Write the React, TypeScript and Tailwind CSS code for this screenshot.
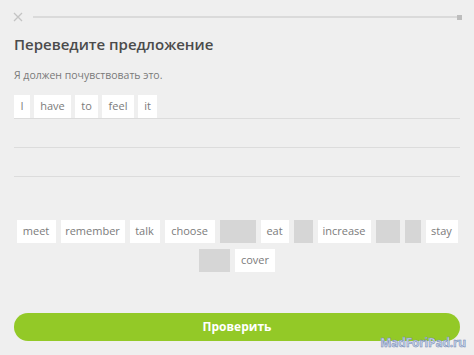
const font = { fontFamily: '"Open Sans", "Noto Sans", sans-serif' };

function Tile({ word, w }: { word?: string; w: string }) {
  if (!word) return <div className={`h-[23px] ${w} bg-[#d6d6d6]`} />;
  return (
    <div className={`h-[23px] ${w} bg-white flex items-center justify-center text-[11px] text-[#7b7b7b]`}>
      {word}
    </div>
  );
}

export default function App() {
  return (
    <div className="w-[474px] h-[355px] bg-[#efefef] relative overflow-hidden" style={font}>
      <div className="flex items-center gap-[10px] pl-[13px] pr-[12px] pt-[12px]">
        <svg width="10" height="10" viewBox="0 0 10 10" className="shrink-0">
          <path d="M1 1 L9 9 M9 1 L1 9" stroke="#c4c4c4" strokeWidth="1.3" />
        </svg>
        <div className="flex-1 flex items-center">
          <div className="flex-1 h-[2px] bg-[#dadada]" />
          <div className="w-[5px] h-[5px] bg-[#bdbdbd]" />
        </div>
      </div>

      <div className="px-[14px]">
        <h1 className="mt-[12px] text-[15px] leading-[20px] font-semibold text-[#4b4b4b]">Переведите предложение</h1>
        <p className="mt-[14px] text-[10.5px] leading-[14px] text-[#7a7a7a]">Я должен почувствовать это.</p>

        <div className="mt-[13px]">
          <div className="flex gap-[4px] h-[24px] border-b border-[#dcdcdc]">
            <Tile word="I" w="w-[16px]" />
            <Tile word="have" w="w-[37px]" />
            <Tile word="to" w="w-[23px]" />
            <Tile word="feel" w="w-[32px]" />
            <Tile word="it" w="w-[19px]" />
          </div>
          <div className="h-[29px] border-b border-[#dcdcdc]" />
          <div className="h-[29px] border-b border-[#dcdcdc]" />
        </div>
      </div>

      <div className="mt-[43px] flex flex-col items-center gap-[6px]">
        <div className="flex gap-[5px]">
          <Tile word="meet" w="w-[39px]" />
          <Tile word="remember" w="w-[64px]" />
          <Tile word="talk" w="w-[30px]" />
          <Tile word="choose" w="w-[50px]" />
          <Tile w="w-[36px]" />
          <Tile word="eat" w="w-[28px]" />
          <Tile w="w-[19px]" />
          <Tile word="increase" w="w-[53px]" />
          <Tile w="w-[24px]" />
          <Tile w="w-[16px]" />
          <Tile word="stay" w="w-[32px]" />
        </div>
        <div className="flex gap-[5px]">
          <Tile w="w-[31px]" />
          <Tile word="cover" w="w-[40px]" />
        </div>
      </div>

      <div className="px-[14px] mt-[41px]">
        <button className="w-full h-[28px] rounded-full bg-[#93c927] text-white text-[12px] font-bold">
          Проверить
        </button>
      </div>

      <div
        className="absolute right-[8px] bottom-[3px] text-[12px] font-bold text-[#c9d4e8] tracking-[-0.2px]"
        style={{ WebkitTextStroke: '0.5px #6f86b3' }}
      >
        MadForiPad.ru
      </div>
    </div>
  );
}
